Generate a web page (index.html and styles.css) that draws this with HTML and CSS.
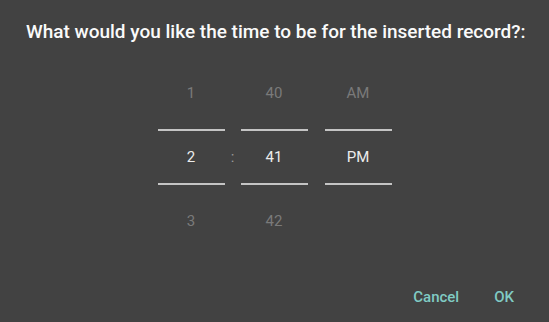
FILE: index.html
```html
<!DOCTYPE html>
<html lang="en">
<head>
  <meta charset="UTF-8">
  <title>Time Picker</title>
  <link rel="stylesheet" href="styles.css">
</head>
<body>
  <div class="dialog">
    <div class="title">What would you like the time to be for the inserted record?:</div>

    <div class="picker">
      <div class="column">
        <div class="cell">1</div>
        <div class="cell selected">2</div>
        <div class="cell">3</div>
      </div>
      <div class="colon">:</div>
      <div class="column">
        <div class="cell">40</div>
        <div class="cell selected">41</div>
        <div class="cell">42</div>
      </div>
      <div class="column ampm">
        <div class="cell">AM</div>
        <div class="cell selected">PM</div>
        <div class="cell"></div>
      </div>
    </div>

    <div class="actions">
      <button class="btn">Cancel</button>
      <button class="btn">OK</button>
    </div>
  </div>
</body>
</html>
```

FILE: styles.css
```css
body {
  margin: 0;
  background: #424242;
  font-family: Roboto, 'Liberation Sans', sans-serif;
}

.dialog {
  width: 549px;
  height: 322px;
  background: #424242;
  display: flex;
  flex-direction: column;
}

.title {
  padding: 20px 0 0 26px;
  height: 27px;
  font-size: 19px;
  font-weight: 500;
  color: #fafafa;
  line-height: 24px;
}

.picker {
  display: flex;
  justify-content: center;
  margin-top: 20px;
}

.column {
  width: 67px;
  display: flex;
  flex-direction: column;
  gap: 10px;
}

.ampm {
  margin-left: 17px;
}

.colon {
  width: 16px;
  text-align: center;
  color: #9a9a9a;
  font-size: 15px;
  line-height: 52px;
  margin-top: 64px;
}

.cell {
  height: 52px;
  line-height: 52px;
  text-align: center;
  font-size: 15px;
  color: #7a7a7a;
}

.selected {
  color: #ececec;
  border-top: 2px solid #c4c4c4;
  border-bottom: 2px solid #c4c4c4;
}

.actions {
  margin-top: auto;
  display: flex;
  justify-content: flex-end;
  gap: 19px;
  padding: 0 27px 8px 0;
}

.btn {
  background: none;
  border: none;
  padding: 8px;
  font-family: Roboto, 'Liberation Sans', sans-serif;
  font-size: 15px;
  font-weight: 500;
  color: #80cbc4;
}
```
